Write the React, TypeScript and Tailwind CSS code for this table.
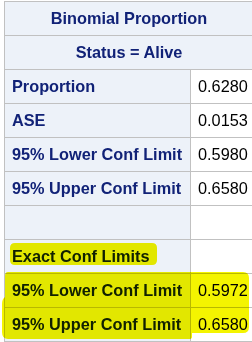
import React from "react";

type Row = { label: string; value?: string };

const rows: Row[] = [
    { label: "Proportion", value: "0.6280" },
    { label: "ASE", value: "0.0153" },
    { label: "95% Lower Conf Limit", value: "0.5980" },
    { label: "95% Upper Conf Limit", value: "0.6580" },
    { label: "" },
    { label: "Exact Conf Limits" },
    { label: "95% Lower Conf Limit", value: "0.5972" },
    { label: "95% Upper Conf Limit", value: "0.6580" },
];

function HeaderRow({ children }: { children: React.ReactNode }) {
    return (
        <div className="h-[34px] border-b border-r border-[#c1c1c1] bg-[#edf2f9] flex items-center justify-center font-bold text-[#112277]">
            {children}
        </div>
    );
}

export default function App() {
    return (
        <div
            className="relative w-[252px] h-[342px] overflow-hidden bg-white pl-[4px] pt-[1px] text-[16.3px] leading-normal"
            style={{ fontFamily: '"Liberation Sans", Arial, sans-serif' }}
        >
            <div className="w-[250px] border-l border-t border-[#c1c1c1]">
                <HeaderRow>Binomial Proportion</HeaderRow>
                <HeaderRow>Status = Alive</HeaderRow>
                {rows.map((r, i) => (
                    <div key={i} className="flex h-[34px] border-b border-r border-[#c1c1c1]">
                        <div className="w-[186px] shrink-0 border-r border-[#c1c1c1] bg-[#edf2f9] flex items-center pl-[7px] font-bold text-[#112277] whitespace-nowrap">
                            {r.label}
                        </div>
                        <div className="flex-1 bg-white flex items-center pl-[7px] text-black whitespace-nowrap">
                            {r.value ?? ""}
                        </div>
                    </div>
                ))}
            </div>

            {/* highlighter marks */}
            <svg
                className="absolute left-0 top-0 mix-blend-multiply pointer-events-none"
                width="252"
                height="342"
                viewBox="0 0 252 342"
            >
                <path
                    d="M15 243 H152 Q157 243 157 248 V260 Q157 265 152 265 H15 Q10 265 10 260 V248 Q10 243 15 243 Z"
                    fill="#f4f400"
                />
                <path
                    d="M8 272 H243 Q249 272 249 278 V327 Q249 333 243 333 H192 V337 Q192 339 189 339 H8 Q2 339 2 332 V304 Q2 299 5 297 V276 Q5 272 8 272 Z"
                    fill="#f4f400"
                />
            </svg>
        </div>
    );
}
